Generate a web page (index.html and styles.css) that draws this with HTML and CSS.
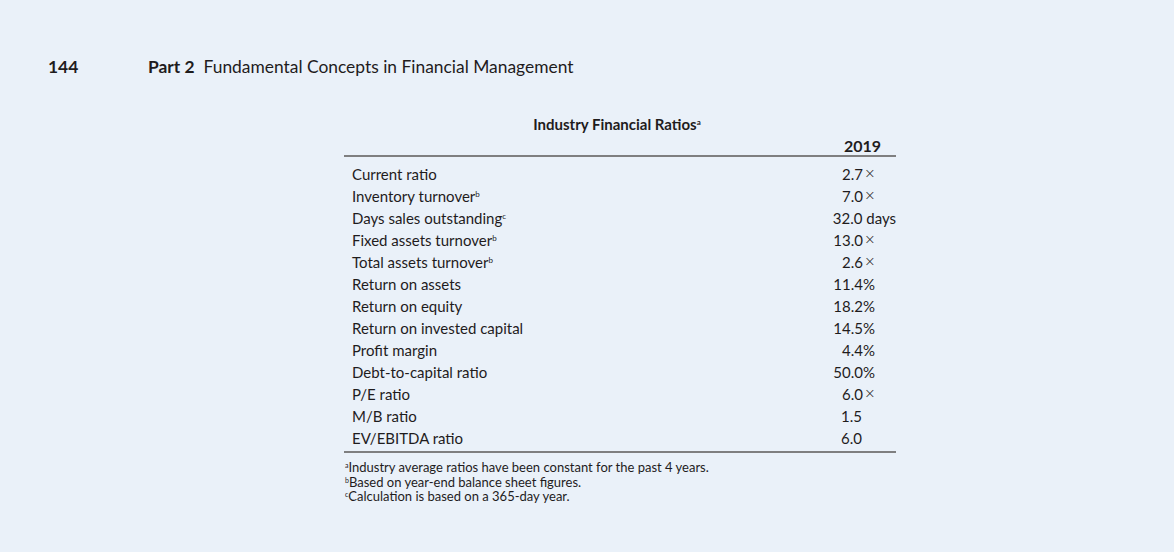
FILE: index.html
```html
<!DOCTYPE html>
<html>
<head>
<meta charset="utf-8">
<link rel="stylesheet" href="styles.css">
</head>
<body>
<header class="running-head">
  <span class="page-num">144</span>
  <span class="part"><b>Part 2</b>&nbsp; Fundamental Concepts in Financial Management</span>
</header>
<section class="ratios">
  <h1 class="title">Industry Financial Ratios<span class="sup">a</span></h1>
  <div class="col-head">2019</div>
  <div class="rows">
    <div class="row"><span class="label">Current ratio</span><span class="val"><span class="num">2.7</span><span class="suf times">×</span></span></div>
    <div class="row"><span class="label">Inventory turnover<span class="sup">b</span></span><span class="val"><span class="num">7.0</span><span class="suf times">×</span></span></div>
    <div class="row"><span class="label">Days sales outstanding<span class="sup">c</span></span><span class="val"><span class="num">32.0</span><span class="suf">&nbsp;days</span></span></div>
    <div class="row"><span class="label">Fixed assets turnover<span class="sup">b</span></span><span class="val"><span class="num">13.0</span><span class="suf times">×</span></span></div>
    <div class="row"><span class="label">Total assets turnover<span class="sup">b</span></span><span class="val"><span class="num">2.6</span><span class="suf times">×</span></span></div>
    <div class="row"><span class="label">Return on assets</span><span class="val"><span class="num">11.4</span><span class="suf">%</span></span></div>
    <div class="row"><span class="label">Return on equity</span><span class="val"><span class="num">18.2</span><span class="suf">%</span></span></div>
    <div class="row"><span class="label">Return on invested capital</span><span class="val"><span class="num">14.5</span><span class="suf">%</span></span></div>
    <div class="row"><span class="label">Profit margin</span><span class="val"><span class="num">4.4</span><span class="suf">%</span></span></div>
    <div class="row"><span class="label">Debt-to-capital ratio</span><span class="val"><span class="num">50.0</span><span class="suf">%</span></span></div>
    <div class="row"><span class="label">P/E ratio</span><span class="val"><span class="num">6.0</span><span class="suf times">×</span></span></div>
    <div class="row"><span class="label">M/B ratio</span><span class="val"><span class="num num-plain">1.5</span></span></div>
    <div class="row"><span class="label">EV/EBITDA ratio</span><span class="val"><span class="num num-plain">6.0</span></span></div>
  </div>
  <ul class="notes">
    <li><span class="sup">a</span>Industry average ratios have been constant for the past 4 years.</li>
    <li><span class="sup">b</span>Based on year-end balance sheet figures.</li>
    <li><span class="sup">c</span>Calculation is based on a 365-day year.</li>
  </ul>
</section>
</body>
</html>
```

FILE: styles.css
```css
html, body {
  margin: 0;
  padding: 0;
}
body {
  background: #eaf1f9;
  color: #1f1c1d;
  font-family: Lato, "Open Sans", "Liberation Sans", sans-serif;
  padding-top: 57px;
  height: 552px;
  box-sizing: border-box;
  overflow: hidden;
}
.running-head {
  display: flex;
  align-items: center;
  line-height: 20px;
  font-size: 17.4px;
  padding-left: 48px;
}
.page-num {
  font-weight: 700;
  width: 100px;
}
.part b {
  font-weight: 700;
}
.ratios {
  width: 552px;
  margin-left: 344px;
  margin-top: 37px;
}
.title {
  margin: 0;
  text-align: center;
  font-size: 15px;
  font-weight: 700;
  line-height: 20px;
  padding-right: 6px;
}
.col-head {
  margin-top: 2px;
  text-align: right;
  font-weight: 700;
  font-size: 16px;
  line-height: 19px;
  padding-right: 15px;
  border-bottom: 2px solid #7f7f80;
}
.rows {
  padding-top: 6px;
  padding-bottom: 2px;
  border-bottom: 2px solid #7f7f80;
}
.row {
  display: grid;
  grid-template-columns: 1fr 79px;
  height: 22px;
  align-items: center;
  font-size: 15px;
  padding-left: 8px;
}
.val {
  display: flex;
  white-space: nowrap;
}
.num {
  width: 46px;
  text-align: right;
}
.num-plain {
  width: 45px;
}
.times {
  font-family: "DejaVu Sans", sans-serif;
  font-weight: 200;
  font-size: 14px;
  padding-left: 1px;
}
.sup {
  font-size: 8px;
  vertical-align: 5px;
  line-height: 1;
}
.notes {
  list-style: none;
  margin: 0;
  padding: 7px 0 0 1px;
  font-size: 13px;
  line-height: 14.5px;
}
.notes .sup {
  font-size: 7px;
  vertical-align: 4px;
}
```
